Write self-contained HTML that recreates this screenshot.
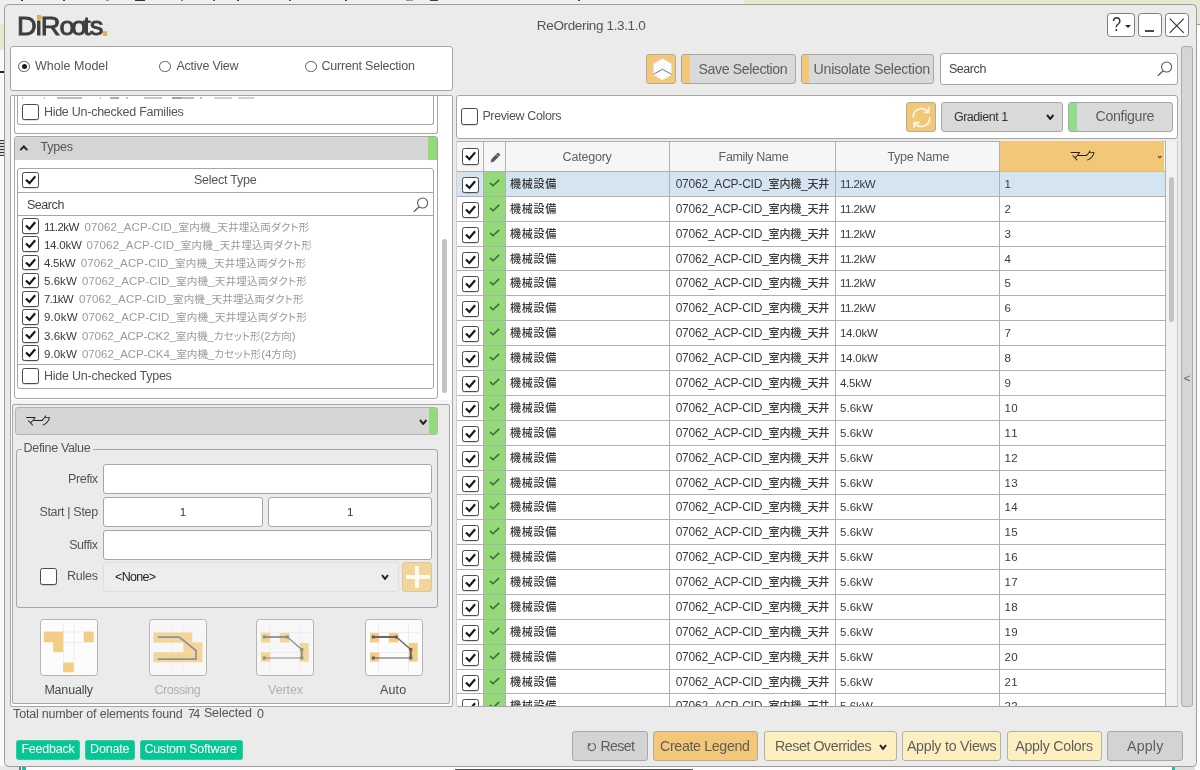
<!DOCTYPE html>
<html><head><meta charset="utf-8"><title>ReOrdering 1.3.1.0</title>
<style>
*{box-sizing:border-box;margin:0;padding:0}
html,body{width:1200px;height:770px;overflow:hidden}
body{position:relative;background:#fdfdfd;font-family:"Liberation Sans","Noto Sans CJK JP",sans-serif;font-size:12.5px;color:#555}
.a{position:absolute}
.win{left:4px;top:4px;width:1192.6px;height:762.6px;background:#ebebeb;border:1px solid #9c9c9c;border-radius:4.5px}
.box{position:absolute;background:#fff;border:1px solid #a6a6a6;border-radius:3px}
.t{position:absolute;white-space:nowrap}
.j{font-size:.92em;font-feature-settings:"palt";font-weight:var(--w,400)}
.cb{position:absolute;background:#fff;border:1px solid #4c4c4c;border-radius:2.5px;box-shadow:0 .5px 0 rgba(0,0,0,.25)}
.btn{position:absolute;border:1px solid #a8a8a8;border-radius:3px;background:#d9d9d9}
.rad{position:absolute;width:11.5px;height:11.5px;border:1px solid #5a5a5a;border-radius:50%;background:#fff}
.rad.on:after{content:"";position:absolute;left:2.25px;top:2.25px;width:5px;height:5px;border-radius:50%;background:#1c1c1c}
#all{position:absolute;left:0;top:0;width:1200px;height:770px;will-change:transform}
</style></head><body><div id="all">

<div class="a" style="left:0;top:0;width:1200px;height:5px;background:#efefef"></div>
<div class="a" style="left:744px;top:0;width:456px;height:24px;background:#e3ecd3"></div>
<div class="a" style="left:1196px;top:24px;width:4px;height:1px;background:#999"></div>
<div class="a" style="left:0;top:0;width:5px;height:24px;background:#efefef"></div>
<div class="a" style="left:0;top:24px;width:5px;height:26px;background:#e3ecd3"></div>
<div class="a" style="left:0;top:50px;width:5px;height:716px;background:#fafafa"></div>
<div class="a" style="left:0;top:71px;width:4px;height:1.5px;background:#222"></div>
<div class="a" style="left:0;top:140px;width:4px;height:16px;background:repeating-linear-gradient(180deg,#333 0 1.5px,#ddd 1.5px 3px)"></div>
<div class="a" style="left:0;top:766px;width:19px;height:4px;background:#e8e8e8"></div>
<div class="a" style="left:19px;top:766px;width:1.5px;height:4px;background:#777"></div>
<div class="a" style="left:22px;top:766px;width:3.5px;height:4px;background:#18c1a0"></div>
<div class="a" style="left:455px;top:769px;width:238px;height:1px;background:#555"></div>
<div class="a" style="left:1172px;top:766px;width:3px;height:4px;background:#18c1a0"></div>
<div class="a" style="left:1175px;top:766px;width:20px;height:4px;background:#dedede"></div>
<div class="a" style="left:21px;top:0;width:2px;height:1px;background:#333"></div>
<div class="a" style="left:63px;top:0;width:2px;height:1px;background:#444"></div>
<div class="a" style="left:106px;top:0;width:3px;height:1px;background:#999"></div>
<div class="a" style="left:135px;top:0;width:10px;height:1px;background:#333"></div>
<div class="a" style="left:181px;top:0;width:2px;height:1px;background:#777"></div>
<div class="a" style="left:213px;top:0;width:2px;height:1px;background:#555"></div>
<div class="a" style="left:237px;top:0;width:2px;height:1px;background:#444"></div>
<div class="a" style="left:289px;top:0;width:2px;height:1px;background:#555"></div>
<div class="a" style="left:345px;top:0;width:2px;height:1px;background:#444"></div>
<div class="a" style="left:406px;top:0;width:7px;height:1px;background:#999"></div>
<div class="a" style="left:430px;top:0;width:8px;height:1px;background:#345"></div>
<div class="a" style="left:578px;top:0;width:2px;height:1px;background:#444"></div>
<div class="a win"></div>
<div class="t" style="left:17px;top:10.5px;font-size:25.5px;line-height:30px;color:#3d3d3d;letter-spacing:-0.9px;-webkit-text-stroke:0.9px #3d3d3d;transform:scaleX(1.07);transform-origin:0 0">DiR<span style="letter-spacing:-3.2px">oo</span>ts</div>
<div class="a" style="left:36.5px;top:15px;width:5.2px;height:5.2px;border-radius:50%;background:#e8b04a"></div>
<div class="t" style="left:98.9px;top:6.4px;font-size:44px;line-height:30px;color:#e8b04a">.</div>
<div class="t" style="left:536.83px;top:18px;font-size:13.5px;line-height:16px;color:#555;letter-spacing:-0.352px;">ReOrdering 1.3.1.0</div>
<div class="box" style="left:1106.5px;top:13px;width:28.5px;height:24px;border-color:#7e7e7e;border-radius:3.5px"></div>
<div class="t" style="left:1111.5px;top:12px;font-size:20.5px;line-height:24px;color:#333;transform:scaleX(.8);transform-origin:0 0">?</div>
<div class="a" style="left:1125px;top:24.5px;border:3.2px solid transparent;border-top:3.8px solid #222;border-bottom:none"></div>
<div class="box" style="left:1138px;top:13px;width:23.5px;height:24px;border-color:#7e7e7e;border-radius:3.5px"></div>
<div class="a" style="left:1144.8px;top:30.2px;width:9.7px;height:1.7px;background:#4a4a4a"></div>
<div class="box" style="left:1165px;top:13px;width:23.5px;height:24px;border-color:#7e7e7e;border-radius:3.5px"></div>
<svg class="a" style="left:1165px;top:13.5px" width="24" height="24"><path d="M4.7 4.7 L18.8 18.9 M18.8 4.7 L4.7 18.9" stroke="#333" stroke-width="1.15"/></svg>
<div class="box" style="left:9.5px;top:45.5px;width:443.5px;height:45px"></div>
<div class="rad on" style="left:18.3px;top:60.7px"></div>
<div class="t" style="left:34.88px;top:58px;font-size:12.5px;line-height:16px;color:#555;letter-spacing:0.030px;">Whole Model</div>
<div class="rad" style="left:159.3px;top:60.7px"></div>
<div class="t" style="left:176.38px;top:58px;font-size:12.5px;line-height:16px;color:#555;letter-spacing:-0.214px;">Active View</div>
<div class="rad" style="left:305px;top:60.7px"></div>
<div class="t" style="left:321.38px;top:58px;font-size:12.5px;line-height:16px;color:#555;letter-spacing:-0.192px;">Current Selection</div>
<div class="box" style="left:9.5px;top:94.5px;width:443.5px;height:612px;border-radius:2px;background:#fff"></div>
<div class="a" style="left:12px;top:404px;width:437.5px;height:300px;background:#ebebeb;border:1px solid #a6a6a6;border-radius:2px"></div>
<div class="a" style="left:10.5px;top:400px;width:441.5px;height:4px;background:#f4f4f4"></div>
<div class="a" style="left:13.5px;top:95.5px;width:424.5px;height:38px;background:#fff;border:1px solid #a6a6a6;border-top:none;border-radius:0 0 3px 3px"></div>
<div class="a" style="left:17px;top:95.5px;width:417px;height:29px;background:#fff;border:1px solid #a6a6a6;border-top:none;border-radius:0 0 3px 3px"></div>
<div class="a" style="left:22px;top:97px;width:232px;height:1.5px;opacity:.55;background:linear-gradient(90deg,#888 0 1px,transparent 1px 22px,#888 22px 23px,transparent 23px 35px,#888 35px 60px,transparent 60px 78px,#888 78px 79px,transparent 79px 88px,#666 88px 97px,transparent 97px 104px,#999 104px 106px,transparent 106px 122px,#999 122px 140px,transparent 140px 150px,#555 150px 160px,#888 160px 172px,transparent 172px 178px,#888 178px 180px,transparent 180px 192px,#aaa 192px 210px,transparent 210px 216px,#aaa 216px 232px)"></div>
<div class="cb" style="left:22px;top:104px;width:16.8px;height:16.3px"></div>
<div class="t" style="left:43.88px;top:104px;font-size:12.5px;line-height:16px;color:#555;letter-spacing:-0.256px;">Hide Un-checked Families</div>
<div class="a" style="left:13.5px;top:136px;width:424.5px;height:262.5px;background:#fff;border:1px solid #a6a6a6;border-radius:3px"></div>
<div class="a" style="left:14.5px;top:137px;width:422.5px;height:23px;background:#d5d5d5;border-radius:2px 2px 0 0"></div>
<div class="a" style="left:428px;top:137px;width:9px;height:23px;background:#95da78;border-radius:0 2px 0 0"></div>
<svg class="a" style="left:19px;top:144px" width="10" height="8" viewBox="0 0 10 8"><path d="M1.3 6.2 L4.8 2.5 L8.3 6.2" fill="none" stroke="#222" stroke-width="1.9"/></svg>
<div class="t" style="left:40.38px;top:139px;font-size:12.5px;line-height:16px;color:#555;letter-spacing:-0.152px;">Types</div>
<div class="box" style="left:17px;top:167.5px;width:417px;height:221.5px"></div>
<div class="a" style="left:18px;top:191.5px;width:415.5px;height:1px;background:#a6a6a6"></div>
<div class="a" style="left:18px;top:215px;width:415.5px;height:1px;background:#a6a6a6"></div>
<div class="a" style="left:18px;top:364px;width:415.5px;height:1px;background:#a6a6a6"></div>
<div class="cb" style="left:22px;top:171.7px;width:16.8px;height:16.3px"><svg style="position:absolute;left:-1px;top:-1px" width="16.8" height="16.3" viewBox="0 0 16 16" preserveAspectRatio="none"><path d="M4.6 8.3 L7.2 10.9 L12 5.1" fill="none" stroke="#1a1a1a" stroke-width="2.15" stroke-linecap="square"/></svg></div>
<div class="t" style="left:193.88px;top:172px;font-size:12.5px;line-height:16px;color:#555;letter-spacing:-0.234px;">Select Type</div>
<div class="t" style="left:26.88px;top:197px;font-size:12.5px;line-height:16px;color:#444;letter-spacing:-0.422px;">Search</div>
<svg class="a" style="left:412.8px;top:197px" width="16" height="16" viewBox="0 0 16 16"><circle cx="9.6" cy="6" r="5" fill="none" stroke="#5a5a5a" stroke-width="1.1"/><path d="M6.1 9.8 L0.8 14.8" stroke="#5a5a5a" stroke-width="1.3"/></svg>
<div class="cb" style="left:22px;top:218.25px;width:16.6px;height:15.9px"><svg style="position:absolute;left:-1px;top:-1px" width="16.6" height="15.9" viewBox="0 0 16 16" preserveAspectRatio="none"><path d="M4.6 8.3 L7.2 10.9 L12 5.1" fill="none" stroke="#1a1a1a" stroke-width="2.15" stroke-linecap="square"/></svg></div>
<div class="t" style="left:43.92px;top:219px;font-size:11.5px;line-height:16px;color:#3a3a3a;letter-spacing:-0.548px;">11.2kW</div>
<div class="t" style="left:84.42px;top:219px;font-size:11.5px;line-height:16px;color:#9a9a9a;letter-spacing:0.150px;">07062_ACP-CID_<span class="j">室内機</span>_<span class="j">天井埋込両ダクト形</span></div>
<div class="cb" style="left:22px;top:236.25px;width:16.6px;height:15.9px"><svg style="position:absolute;left:-1px;top:-1px" width="16.6" height="15.9" viewBox="0 0 16 16" preserveAspectRatio="none"><path d="M4.6 8.3 L7.2 10.9 L12 5.1" fill="none" stroke="#1a1a1a" stroke-width="2.15" stroke-linecap="square"/></svg></div>
<div class="t" style="left:43.92px;top:237px;font-size:11.5px;line-height:16px;color:#3a3a3a;letter-spacing:-0.220px;">14.0kW</div>
<div class="t" style="left:86.42px;top:237px;font-size:11.5px;line-height:16px;color:#9a9a9a;letter-spacing:0.169px;">07062_ACP-CID_<span class="j">室内機</span>_<span class="j">天井埋込両ダクト形</span></div>
<div class="cb" style="left:22px;top:254.5px;width:16.6px;height:15.9px"><svg style="position:absolute;left:-1px;top:-1px" width="16.6" height="15.9" viewBox="0 0 16 16" preserveAspectRatio="none"><path d="M4.6 8.3 L7.2 10.9 L12 5.1" fill="none" stroke="#1a1a1a" stroke-width="2.15" stroke-linecap="square"/></svg></div>
<div class="t" style="left:43.92px;top:255px;font-size:11.5px;line-height:16px;color:#3a3a3a;letter-spacing:-0.236px;">4.5kW</div>
<div class="t" style="left:80.67px;top:255px;font-size:11.5px;line-height:16px;color:#9a9a9a;letter-spacing:0.169px;">07062_ACP-CID_<span class="j">室内機</span>_<span class="j">天井埋込両ダクト形</span></div>
<div class="cb" style="left:22px;top:272.5px;width:16.6px;height:15.9px"><svg style="position:absolute;left:-1px;top:-1px" width="16.6" height="15.9" viewBox="0 0 16 16" preserveAspectRatio="none"><path d="M4.6 8.3 L7.2 10.9 L12 5.1" fill="none" stroke="#1a1a1a" stroke-width="2.15" stroke-linecap="square"/></svg></div>
<div class="t" style="left:43.92px;top:273px;font-size:11.5px;line-height:16px;color:#3a3a3a;letter-spacing:0.077px;">5.6kW</div>
<div class="t" style="left:81.92px;top:273px;font-size:11.5px;line-height:16px;color:#9a9a9a;letter-spacing:0.150px;">07062_ACP-CID_<span class="j">室内機</span>_<span class="j">天井埋込両ダクト形</span></div>
<div class="cb" style="left:22px;top:290.75px;width:16.6px;height:15.9px"><svg style="position:absolute;left:-1px;top:-1px" width="16.6" height="15.9" viewBox="0 0 16 16" preserveAspectRatio="none"><path d="M4.6 8.3 L7.2 10.9 L12 5.1" fill="none" stroke="#1a1a1a" stroke-width="2.15" stroke-linecap="square"/></svg></div>
<div class="t" style="left:43.92px;top:291px;font-size:11.5px;line-height:16px;color:#3a3a3a;letter-spacing:-0.736px;">7.1kW</div>
<div class="t" style="left:78.92px;top:291px;font-size:11.5px;line-height:16px;color:#9a9a9a;letter-spacing:0.140px;">07062_ACP-CID_<span class="j">室内機</span>_<span class="j">天井埋込両ダクト形</span></div>
<div class="cb" style="left:22px;top:308.75px;width:16.6px;height:15.9px"><svg style="position:absolute;left:-1px;top:-1px" width="16.6" height="15.9" viewBox="0 0 16 16" preserveAspectRatio="none"><path d="M4.6 8.3 L7.2 10.9 L12 5.1" fill="none" stroke="#1a1a1a" stroke-width="2.15" stroke-linecap="square"/></svg></div>
<div class="t" style="left:43.92px;top:309px;font-size:11.5px;line-height:16px;color:#3a3a3a;letter-spacing:0.264px;">9.0kW</div>
<div class="t" style="left:81.92px;top:309px;font-size:11.5px;line-height:16px;color:#9a9a9a;letter-spacing:0.150px;">07062_ACP-CID_<span class="j">室内機</span>_<span class="j">天井埋込両ダクト形</span></div>
<div class="cb" style="left:22px;top:327px;width:16.6px;height:15.9px"><svg style="position:absolute;left:-1px;top:-1px" width="16.6" height="15.9" viewBox="0 0 16 16" preserveAspectRatio="none"><path d="M4.6 8.3 L7.2 10.9 L12 5.1" fill="none" stroke="#1a1a1a" stroke-width="2.15" stroke-linecap="square"/></svg></div>
<div class="t" style="left:43.92px;top:328px;font-size:11.5px;line-height:16px;color:#3a3a3a;letter-spacing:0.077px;">3.6kW</div>
<div class="t" style="left:81.92px;top:328px;font-size:11.5px;line-height:16px;color:#9a9a9a;letter-spacing:-0.048px;">07062_ACP-CK2_<span class="j">室内機</span>_<span class="j">カセット形</span>(2<span class="j">方向</span>)</div>
<div class="cb" style="left:22px;top:345.25px;width:16.6px;height:15.9px"><svg style="position:absolute;left:-1px;top:-1px" width="16.6" height="15.9" viewBox="0 0 16 16" preserveAspectRatio="none"><path d="M4.6 8.3 L7.2 10.9 L12 5.1" fill="none" stroke="#1a1a1a" stroke-width="2.15" stroke-linecap="square"/></svg></div>
<div class="t" style="left:43.92px;top:346px;font-size:11.5px;line-height:16px;color:#3a3a3a;letter-spacing:0.077px;">9.0kW</div>
<div class="t" style="left:81.92px;top:346px;font-size:11.5px;line-height:16px;color:#9a9a9a;letter-spacing:-0.019px;">07062_ACP-CK4_<span class="j">室内機</span>_<span class="j">カセット形</span>(4<span class="j">方向</span>)</div>
<div class="cb" style="left:22px;top:368px;width:16.8px;height:16.3px"></div>
<div class="t" style="left:43.88px;top:368px;font-size:12.5px;line-height:16px;color:#555;letter-spacing:-0.224px;">Hide Un-checked Types</div>
<div class="a" style="left:442.3px;top:238.5px;width:5px;height:154px;background:#c4c4c4;border-radius:2.5px"></div>
<div class="a" style="left:14.5px;top:406.5px;width:423px;height:28.5px;background:#d6d6d6;border:1px solid #b4b4b4;border-radius:3px"></div>
<div class="a" style="left:428.5px;top:407.5px;width:8px;height:26.5px;background:#95da78;border-radius:0 2px 2px 0"></div>
<div class="t" style="left:25.62px;top:413px;font-size:12.5px;line-height:16px;color:#222;letter-spacing:-3.477px;"><span class="j">マーク</span></div>
<svg class="a" style="left:418.5px;top:418.5px" width="8.5" height="6.5" viewBox="0 0 8.5 6.5"><path d="M1 1 L4.25 4.9 L7.5 1" fill="none" stroke="#222" stroke-width="2"/></svg>
<div class="a" style="left:15.5px;top:448.5px;width:422px;height:159px;border:1px solid #a6a6a6;border-radius:3px"></div>
<div class="a" style="left:21.5px;top:446px;width:71px;height:5px;background:#ebebeb"></div>
<div class="t" style="left:23.62px;top:440px;font-size:12.5px;line-height:16px;color:#555;letter-spacing:-0.332px;">Define Value</div>
<div class="t" style="left:68.12px;top:471px;font-size:12.5px;line-height:16px;color:#555;letter-spacing:-0.391px;">Prefix</div>
<div class="box" style="left:102.5px;top:464px;width:329.5px;height:30px"></div>
<div class="t" style="left:39.38px;top:504px;font-size:12.5px;line-height:16px;color:#555;letter-spacing:-0.324px;">Start | Step</div>
<div class="box" style="left:102.5px;top:496.5px;width:160.5px;height:30px"></div>
<div class="t" style="left:179.73px;top:504px;font-size:11.5px;line-height:16px;color:#333;letter-spacing:0.0px;">1</div>
<div class="box" style="left:267.5px;top:496.5px;width:164.5px;height:30px"></div>
<div class="t" style="left:347.12px;top:504px;font-size:11.5px;line-height:16px;color:#333;letter-spacing:0.0px;">1</div>
<div class="t" style="left:69.17px;top:537px;font-size:12.5px;line-height:16px;color:#555;letter-spacing:-0.419px;">Suffix</div>
<div class="box" style="left:102.5px;top:529.5px;width:329.5px;height:30px"></div>
<div class="cb" style="left:40px;top:568px;width:16.8px;height:16.8px"></div>
<div class="t" style="left:66.88px;top:568px;font-size:12.5px;line-height:16px;color:#555;letter-spacing:-0.180px;">Rules</div>
<div class="a" style="left:102.5px;top:562px;width:296.5px;height:29.5px;background:#ededed;border:1px solid #dedede;border-radius:3px"></div>
<div class="t" style="left:115.08px;top:569px;font-size:12.5px;line-height:16px;color:#222;letter-spacing:-0.707px;">&lt;None&gt;</div>
<svg class="a" style="left:381px;top:573.8px" width="8" height="6.5" viewBox="0 0 8 6.5"><path d="M1 1 L4 4.9 L7 1" fill="none" stroke="#222" stroke-width="2"/></svg>
<div class="a" style="left:402px;top:562px;width:29.5px;height:29.5px;background:#f3d49a;border:1px solid #d9c7a2;border-radius:3px"></div>
<div class="a" style="left:406px;top:575.3px;width:24px;height:3.8px;background:#fffaf2"></div><div class="a" style="left:415px;top:566px;width:4.2px;height:22px;background:#fffaf2"></div>
<div class="a" style="left:40px;top:619px;width:57.5px;height:57px;background:#fcfcfc;border:1px solid #b4b4b4;border-radius:3.5px"></div>
<svg class="a" style="left:40px;top:619px" width="58" height="58" viewBox="0 0 58 58"><path d="M23.5 4 V53 M34 4 V53 M4 13 H54 M4 23.5 H54" stroke="#eeeeee" stroke-width="1" fill="none"/><g fill="#f2cd83"><rect x="3.7" y="12.7" width="19.5" height="10.3"/><rect x="43.7" y="12.7" width="10" height="10.3"/><rect x="13.2" y="23" width="10" height="10.200"/><rect x="23.2" y="43.5" width="10.5" height="9.800"/></g></svg>
<div class="a" style="left:149.2px;top:619px;width:57.5px;height:57px;background:#f7f7f7;border:1px solid #b4b4b4;border-radius:3.5px"></div>
<svg class="a" style="left:149.2px;top:619px" width="58" height="58" viewBox="0 0 58 58"><path d="M23.5 4 V53 M34 4 V53 M4 13 H54 M4 23.5 H54" stroke="#eeeeee" stroke-width="1" fill="none"/><g fill="#f3d598"><rect x="4.5" y="13.5" width="38.7" height="10"/><rect x="4.5" y="33.2" width="49" height="10"/><rect x="34.500" y="23.500" width="19" height="10"/></g><path d="M8.800 18.200 H30.3 L47 31.500 V40.200 H8.800" fill="none" stroke="#8a93a0" stroke-width="1.700"/></svg>
<div class="a" style="left:256.2px;top:619px;width:57.5px;height:57px;background:#f7f7f7;border:1px solid #b4b4b4;border-radius:3.5px"></div>
<svg class="a" style="left:256.2px;top:619px" width="58" height="58" viewBox="0 0 58 58"><path d="M13.5 4 V53 M43.5 4 V53 M4 13.5 H54 M4 33.5 H54" stroke="#eeeeee" stroke-width="1" fill="none"/><g fill="#f3d598"><rect x="5" y="14" width="9.300" height="9.500"/><rect x="23.800" y="14" width="9.500" height="9.500"/><rect x="43.800" y="24" width="8.800" height="18.700"/><rect x="5" y="33.500" width="9.300" height="9.200"/></g><path d="M8.300 18 H31.300" fill="none" stroke="#8c8c8c" stroke-width="1.8"/><path d="M31.300 18 L45.800 30.500" fill="none" stroke="#8c8c8c" stroke-width="1.300"/><path d="M45.800 30.500 V39" fill="none" stroke="#8c8c8c" stroke-width="1.8"/><path d="M8.300 39 H45.800" stroke="#8c8c8c" stroke-width="1"/><g fill="#8c8c8c"><rect x="6.800" y="16.500" width="3" height="3"/><rect x="29.800" y="16.500" width="3" height="3"/><rect x="44.300" y="29" width="3" height="3"/><rect x="44.300" y="37.500" width="3" height="3"/><rect x="6.800" y="37.500" width="3" height="3"/></g></svg>
<div class="a" style="left:365px;top:619px;width:57.5px;height:57px;background:#fcfcfc;border:1px solid #b4b4b4;border-radius:3.5px"></div>
<svg class="a" style="left:365px;top:619px" width="58" height="58" viewBox="0 0 58 58"><path d="M13.5 4 V53 M43.5 4 V53 M4 13.5 H54 M4 33.5 H54" stroke="#eeeeee" stroke-width="1" fill="none"/><g fill="#f2cd83"><rect x="5" y="14" width="9.300" height="9.500"/><rect x="23.800" y="14" width="9.500" height="9.500"/><rect x="43.800" y="24" width="8.800" height="18.700"/><rect x="5" y="33.500" width="9.300" height="9.200"/></g><path d="M8.300 18 H31.300" fill="none" stroke="#5f5f5f" stroke-width="1.9"/><path d="M31.300 18 L45.800 30.500" fill="none" stroke="#5f5f5f" stroke-width="1.300"/><path d="M45.800 30.500 V39" fill="none" stroke="#5f5f5f" stroke-width="1.9"/><path d="M8.300 39 H45.800" stroke="#5f5f5f" stroke-width="1"/><g fill="#5f5f5f"><rect x="6.800" y="16.500" width="3" height="3"/><rect x="29.800" y="16.500" width="3" height="3"/><rect x="44.300" y="29" width="3" height="3"/><rect x="44.300" y="37.500" width="3" height="3"/><rect x="6.800" y="37.500" width="3" height="3"/></g></svg>
<div class="t" style="left:44.38px;top:682px;font-size:12.5px;line-height:16px;color:#4a4a4a;letter-spacing:-0.183px;">Manually</div>
<div class="t" style="left:154.38px;top:682px;font-size:12.5px;line-height:16px;color:#b0b0b0;letter-spacing:-0.440px;">Crossing</div>
<div class="t" style="left:268.12px;top:682px;font-size:12.5px;line-height:16px;color:#b0b0b0;letter-spacing:-0.087px;">Vertex</div>
<div class="t" style="left:379.88px;top:682px;font-size:12.5px;line-height:16px;color:#4a4a4a;letter-spacing:0.177px;">Auto</div>
<div class="t" style="left:13.12px;top:706px;font-size:12.5px;line-height:16px;color:#555;letter-spacing:-0.193px;">Total number of elements found</div>
<div class="t" style="left:188.12px;top:706px;font-size:12.5px;line-height:16px;color:#555;letter-spacing:-1.906px;">74</div>
<div class="t" style="left:203.88px;top:705px;font-size:12.5px;line-height:16px;color:#555;letter-spacing:-0.094px;">Selected</div>
<div class="t" style="left:256.88px;top:706px;font-size:12.5px;line-height:16px;color:#555;letter-spacing:0.0px;">0</div>
<div class="a" style="left:16.25px;top:739.5px;width:63.75px;height:20px;background:#06c794;border-radius:3px;border:1px dotted #4fd8b2"></div>
<div class="a" style="left:85px;top:739.5px;width:49.5px;height:20px;background:#06c794;border-radius:3px;border:1px dotted #4fd8b2"></div>
<div class="a" style="left:139.5px;top:739.5px;width:103px;height:20px;background:#06c794;border-radius:3px;border:1px dotted #4fd8b2"></div>
<div class="t" style="left:21.38px;top:741px;font-size:12.5px;line-height:16px;color:#fff;letter-spacing:-0.201px;">Feedback</div>
<div class="t" style="left:90.12px;top:741px;font-size:12.5px;line-height:16px;color:#fff;letter-spacing:-0.212px;">Donate</div>
<div class="t" style="left:144.38px;top:741px;font-size:12.5px;line-height:16px;color:#fff;letter-spacing:-0.241px;">Custom Software</div>
<div class="a" style="left:645.5px;top:53.5px;width:30.5px;height:30.5px;background:#f2c878;border:1px solid #b3ab98;border-radius:3px"></div>
<svg class="a" style="left:645.5px;top:53.5px" width="31" height="31" viewBox="0 0 31 31"><path d="M16.500 4.500 L25.700 9.700 V21 L16.500 26.200 L7.300 21 V9.700 Z" fill="#fcfcfc" stroke="#e6dcc6" stroke-width=".8"/><path d="M7.500 20.300 L16.500 15.300 L25.500 20.300" fill="none" stroke="#666" stroke-width=".9"/></svg>
<div class="btn" style="left:681.25px;top:53.5px;width:114.25px;height:30.5px"></div>
<div class="a" style="left:682.25px;top:54.5px;width:7.5px;height:28.5px;background:#f2c878;border-radius:2px 0 0 2px"></div>
<div class="t" style="left:698.54px;top:61px;font-size:14.2px;line-height:16px;color:#5e5e5e;letter-spacing:-0.422px;">Save Selection</div>
<div class="btn" style="left:800.75px;top:53.5px;width:133.25px;height:30.5px"></div>
<div class="a" style="left:801.75px;top:54.5px;width:7.5px;height:28.5px;background:#f2c878;border-radius:2px 0 0 2px"></div>
<div class="t" style="left:813.54px;top:61px;font-size:14.2px;line-height:16px;color:#5e5e5e;letter-spacing:-0.266px;">Unisolate Selection</div>
<div class="box" style="left:939.5px;top:53px;width:238px;height:31.5px"></div>
<div class="t" style="left:948.88px;top:61px;font-size:12.5px;line-height:16px;color:#444;letter-spacing:-0.422px;">Search</div>
<svg class="a" style="left:1157.2px;top:61.2px" width="16" height="16" viewBox="0 0 16 16"><circle cx="9.6" cy="6" r="5" fill="none" stroke="#5a5a5a" stroke-width="1.1"/><path d="M6.1 9.8 L0.8 14.8" stroke="#5a5a5a" stroke-width="1.3"/></svg>
<div class="box" style="left:456px;top:94.5px;width:721.5px;height:44px"></div>
<div class="cb" style="left:461.2px;top:108px;width:16.8px;height:16.5px"></div>
<div class="t" style="left:482.38px;top:108px;font-size:12.5px;line-height:16px;color:#555;letter-spacing:-0.370px;">Preview Colors</div>
<div class="a" style="left:905.5px;top:101.5px;width:30.5px;height:30.5px;background:#f2c878;border:1px solid #b3ab98;border-radius:3px"></div>
<svg class="a" style="left:905.5px;top:101.5px" width="31" height="31" viewBox="0 0 31 31"><g fill="none" stroke="#fdf7ea" stroke-width="1.700" stroke-linecap="round" stroke-linejoin="round"><path d="M7.300 14.800 A8.300 8.300 0 0 1 22.300 10"/><path d="M22.800 5.800 V10.300 H18.300"/><path d="M23.700 16.200 A8.300 8.300 0 0 1 8.700 21"/><path d="M8.200 25.200 V20.700 H12.700"/></g></svg>
<div class="btn" style="left:941.25px;top:101.5px;width:122px;height:30.5px"></div>
<div class="t" style="left:953.88px;top:109px;font-size:12.5px;line-height:16px;color:#333;letter-spacing:-0.458px;">Gradient 1</div>
<svg class="a" style="left:1045.5px;top:113.8px" width="8.5" height="6.5" viewBox="0 0 8.5 6.5"><path d="M1 1 L4.25 4.9 L7.5 1" fill="none" stroke="#222" stroke-width="2"/></svg>
<div class="btn" style="left:1068.25px;top:101.5px;width:105px;height:30.5px"></div>
<div class="a" style="left:1069.25px;top:102.5px;width:8px;height:28.5px;background:#90dd8e;border-radius:2px 0 0 2px"></div>
<div class="t" style="left:1095.54px;top:108px;font-size:14.2px;line-height:16px;color:#5e5e5e;letter-spacing:-0.326px;">Configure</div>
<div class="a" style="left:456.5px;top:141px;width:721px;height:565px;background:#fff;overflow:hidden">
<div class="a" style="left:0;top:0;width:709px;height:31px;background:#f6f6f6;border-top:1px solid #b0b0b0;border-bottom:1px solid #b0b0b0"></div>
<div class="a" style="left:543px;top:0;width:164.7px;height:30.5px;background:#f2c878;border-bottom:1px dotted #d8b060"></div>
</div>
<div class="a" style="left:0;top:0;width:1200px;height:706px;overflow:hidden">
<div class="cb" style="left:462px;top:148.3px;width:16.5px;height:16.4px"><svg style="position:absolute;left:-1px;top:-1px" width="16.5" height="16.4" viewBox="0 0 16 16" preserveAspectRatio="none"><path d="M4.6 8.3 L7.2 10.9 L12 5.1" fill="none" stroke="#1a1a1a" stroke-width="2.15" stroke-linecap="square"/></svg></div>
<svg class="a" style="left:489.5px;top:151.5px" width="11" height="11" viewBox="0 0 11 11"><path d="M.6 10.400 L1.500 7 L7.400 1.100 Q8 .5 8.600 1.100 L9.900 2.400 Q10.500 3 9.900 3.600 L4 9.500 Z" fill="#5a5a5a"/><path d="M6.300 2.700 L8.300 4.700" stroke="#f6f6f6" stroke-width=".7"/></svg>
<div class="t" style="left:562.62px;top:149px;font-size:12.5px;line-height:16px;color:#616161;letter-spacing:-0.212px;">Category</div>
<div class="t" style="left:718.62px;top:149px;font-size:12.5px;line-height:16px;color:#616161;letter-spacing:-0.362px;">Family Name</div>
<div class="t" style="left:887.38px;top:149px;font-size:12.5px;line-height:16px;color:#616161;letter-spacing:-0.240px;">Type Name</div>
<div class="t" style="left:1070.12px;top:148px;font-size:12.5px;line-height:16px;color:#222;letter-spacing:-3.477px;"><span class="j">マーク</span></div>
<svg class="a" style="left:1156.7px;top:154.8px" width="5.5" height="4.4" viewBox="0 0 5.5 4.4"><path d="M1 1 L2.75 2.8 L4.5 1" fill="none" stroke="#444" stroke-width="1.1"/></svg>
<div class="a" style="left:457px;top:172px;width:708px;height:24px;background:#d5e4f1"></div>
<div class="a" style="left:484px;top:172px;width:21px;height:25px;background:#95da78"></div>
<div class="a" style="left:457px;top:196px;width:708px;height:1px;background:#b0b0b0"></div>
<div class="cb" style="left:462px;top:176.6px;width:16.5px;height:16px"><svg style="position:absolute;left:-1px;top:-1px" width="16.5" height="16" viewBox="0 0 16 16" preserveAspectRatio="none"><path d="M4.6 8.3 L7.2 10.9 L12 5.1" fill="none" stroke="#1a1a1a" stroke-width="2.15" stroke-linecap="square"/></svg></div>
<div class="a" style="left:488.6px;top:179px"><svg style="display:block" viewBox="0 0 12 9" width="12" height="9"><path d="M1 3.9 L4 6.8 L10.2 0.9" fill="none" stroke="#40663c" stroke-width="1.5"/></svg></div>
<div class="t" style="left:509.90px;top:176px;font-size:12px;line-height:16px;color:#333;letter-spacing:0.775px;--w:500;"><span class="j">機械設備</span></div>
<div class="t" style="left:675.65px;top:176px;font-size:12px;line-height:16px;color:#3a3a3a;letter-spacing:-0.221px;--w:500;">07062_ACP-CID_<span class="j">室内機</span>_<span class="j">天井</span></div>
<div class="t" style="left:839.92px;top:176px;font-size:11.5px;line-height:16px;color:#3a3a3a;letter-spacing:-0.498px;">11.2kW</div>
<div class="t" style="left:1004.42px;top:176px;font-size:11.5px;line-height:16px;color:#3a3a3a;letter-spacing:0.0px;">1</div>
<div class="a" style="left:484px;top:197px;width:21px;height:25px;background:#95da78"></div>
<div class="a" style="left:457px;top:221px;width:708px;height:1px;background:#b0b0b0"></div>
<div class="cb" style="left:462px;top:201.6px;width:16.5px;height:16px"><svg style="position:absolute;left:-1px;top:-1px" width="16.5" height="16" viewBox="0 0 16 16" preserveAspectRatio="none"><path d="M4.6 8.3 L7.2 10.9 L12 5.1" fill="none" stroke="#1a1a1a" stroke-width="2.15" stroke-linecap="square"/></svg></div>
<div class="a" style="left:488.6px;top:204px"><svg style="display:block" viewBox="0 0 12 9" width="12" height="9"><path d="M1 3.9 L4 6.8 L10.2 0.9" fill="none" stroke="#40663c" stroke-width="1.5"/></svg></div>
<div class="t" style="left:509.90px;top:201px;font-size:12px;line-height:16px;color:#333;letter-spacing:0.775px;--w:500;"><span class="j">機械設備</span></div>
<div class="t" style="left:675.65px;top:201px;font-size:12px;line-height:16px;color:#3a3a3a;letter-spacing:-0.221px;--w:500;">07062_ACP-CID_<span class="j">室内機</span>_<span class="j">天井</span></div>
<div class="t" style="left:839.92px;top:201px;font-size:11.5px;line-height:16px;color:#3a3a3a;letter-spacing:-0.498px;">11.2kW</div>
<div class="t" style="left:1004.42px;top:201px;font-size:11.5px;line-height:16px;color:#3a3a3a;letter-spacing:0.0px;">2</div>
<div class="a" style="left:484px;top:222px;width:21px;height:25px;background:#95da78"></div>
<div class="a" style="left:457px;top:246px;width:708px;height:1px;background:#b0b0b0"></div>
<div class="cb" style="left:462px;top:226.6px;width:16.5px;height:16px"><svg style="position:absolute;left:-1px;top:-1px" width="16.5" height="16" viewBox="0 0 16 16" preserveAspectRatio="none"><path d="M4.6 8.3 L7.2 10.9 L12 5.1" fill="none" stroke="#1a1a1a" stroke-width="2.15" stroke-linecap="square"/></svg></div>
<div class="a" style="left:488.6px;top:229px"><svg style="display:block" viewBox="0 0 12 9" width="12" height="9"><path d="M1 3.9 L4 6.8 L10.2 0.9" fill="none" stroke="#40663c" stroke-width="1.5"/></svg></div>
<div class="t" style="left:509.90px;top:226px;font-size:12px;line-height:16px;color:#333;letter-spacing:0.775px;--w:500;"><span class="j">機械設備</span></div>
<div class="t" style="left:675.65px;top:226px;font-size:12px;line-height:16px;color:#3a3a3a;letter-spacing:-0.221px;--w:500;">07062_ACP-CID_<span class="j">室内機</span>_<span class="j">天井</span></div>
<div class="t" style="left:839.92px;top:226px;font-size:11.5px;line-height:16px;color:#3a3a3a;letter-spacing:-0.498px;">11.2kW</div>
<div class="t" style="left:1004.42px;top:226px;font-size:11.5px;line-height:16px;color:#3a3a3a;letter-spacing:0.0px;">3</div>
<div class="a" style="left:484px;top:247px;width:21px;height:24px;background:#95da78"></div>
<div class="a" style="left:457px;top:270px;width:708px;height:1px;background:#b0b0b0"></div>
<div class="cb" style="left:462px;top:251.6px;width:16.5px;height:16px"><svg style="position:absolute;left:-1px;top:-1px" width="16.5" height="16" viewBox="0 0 16 16" preserveAspectRatio="none"><path d="M4.6 8.3 L7.2 10.9 L12 5.1" fill="none" stroke="#1a1a1a" stroke-width="2.15" stroke-linecap="square"/></svg></div>
<div class="a" style="left:488.6px;top:254px"><svg style="display:block" viewBox="0 0 12 9" width="12" height="9"><path d="M1 3.9 L4 6.8 L10.2 0.9" fill="none" stroke="#40663c" stroke-width="1.5"/></svg></div>
<div class="t" style="left:509.90px;top:251px;font-size:12px;line-height:16px;color:#333;letter-spacing:0.775px;--w:500;"><span class="j">機械設備</span></div>
<div class="t" style="left:675.65px;top:251px;font-size:12px;line-height:16px;color:#3a3a3a;letter-spacing:-0.221px;--w:500;">07062_ACP-CID_<span class="j">室内機</span>_<span class="j">天井</span></div>
<div class="t" style="left:839.92px;top:251px;font-size:11.5px;line-height:16px;color:#3a3a3a;letter-spacing:-0.498px;">11.2kW</div>
<div class="t" style="left:1004.42px;top:251px;font-size:11.5px;line-height:16px;color:#3a3a3a;letter-spacing:0.0px;">4</div>
<div class="a" style="left:484px;top:271px;width:21px;height:25px;background:#95da78"></div>
<div class="a" style="left:457px;top:295px;width:708px;height:1px;background:#b0b0b0"></div>
<div class="cb" style="left:462px;top:275.6px;width:16.5px;height:16px"><svg style="position:absolute;left:-1px;top:-1px" width="16.5" height="16" viewBox="0 0 16 16" preserveAspectRatio="none"><path d="M4.6 8.3 L7.2 10.9 L12 5.1" fill="none" stroke="#1a1a1a" stroke-width="2.15" stroke-linecap="square"/></svg></div>
<div class="a" style="left:488.6px;top:278px"><svg style="display:block" viewBox="0 0 12 9" width="12" height="9"><path d="M1 3.9 L4 6.8 L10.2 0.9" fill="none" stroke="#40663c" stroke-width="1.5"/></svg></div>
<div class="t" style="left:509.90px;top:275px;font-size:12px;line-height:16px;color:#333;letter-spacing:0.775px;--w:500;"><span class="j">機械設備</span></div>
<div class="t" style="left:675.65px;top:275px;font-size:12px;line-height:16px;color:#3a3a3a;letter-spacing:-0.221px;--w:500;">07062_ACP-CID_<span class="j">室内機</span>_<span class="j">天井</span></div>
<div class="t" style="left:839.92px;top:275px;font-size:11.5px;line-height:16px;color:#3a3a3a;letter-spacing:-0.498px;">11.2kW</div>
<div class="t" style="left:1004.42px;top:275px;font-size:11.5px;line-height:16px;color:#3a3a3a;letter-spacing:0.0px;">5</div>
<div class="a" style="left:484px;top:296px;width:21px;height:25px;background:#95da78"></div>
<div class="a" style="left:457px;top:320px;width:708px;height:1px;background:#b0b0b0"></div>
<div class="cb" style="left:462px;top:300.6px;width:16.5px;height:16px"><svg style="position:absolute;left:-1px;top:-1px" width="16.5" height="16" viewBox="0 0 16 16" preserveAspectRatio="none"><path d="M4.6 8.3 L7.2 10.9 L12 5.1" fill="none" stroke="#1a1a1a" stroke-width="2.15" stroke-linecap="square"/></svg></div>
<div class="a" style="left:488.6px;top:303px"><svg style="display:block" viewBox="0 0 12 9" width="12" height="9"><path d="M1 3.9 L4 6.8 L10.2 0.9" fill="none" stroke="#40663c" stroke-width="1.5"/></svg></div>
<div class="t" style="left:509.90px;top:300px;font-size:12px;line-height:16px;color:#333;letter-spacing:0.775px;--w:500;"><span class="j">機械設備</span></div>
<div class="t" style="left:675.65px;top:300px;font-size:12px;line-height:16px;color:#3a3a3a;letter-spacing:-0.221px;--w:500;">07062_ACP-CID_<span class="j">室内機</span>_<span class="j">天井</span></div>
<div class="t" style="left:839.92px;top:300px;font-size:11.5px;line-height:16px;color:#3a3a3a;letter-spacing:-0.498px;">11.2kW</div>
<div class="t" style="left:1004.42px;top:300px;font-size:11.5px;line-height:16px;color:#3a3a3a;letter-spacing:0.0px;">6</div>
<div class="a" style="left:484px;top:321px;width:21px;height:25px;background:#95da78"></div>
<div class="a" style="left:457px;top:345px;width:708px;height:1px;background:#b0b0b0"></div>
<div class="cb" style="left:462px;top:325.6px;width:16.5px;height:16px"><svg style="position:absolute;left:-1px;top:-1px" width="16.5" height="16" viewBox="0 0 16 16" preserveAspectRatio="none"><path d="M4.6 8.3 L7.2 10.9 L12 5.1" fill="none" stroke="#1a1a1a" stroke-width="2.15" stroke-linecap="square"/></svg></div>
<div class="a" style="left:488.6px;top:328px"><svg style="display:block" viewBox="0 0 12 9" width="12" height="9"><path d="M1 3.9 L4 6.8 L10.2 0.9" fill="none" stroke="#40663c" stroke-width="1.5"/></svg></div>
<div class="t" style="left:509.90px;top:325px;font-size:12px;line-height:16px;color:#333;letter-spacing:0.775px;--w:500;"><span class="j">機械設備</span></div>
<div class="t" style="left:675.65px;top:325px;font-size:12px;line-height:16px;color:#3a3a3a;letter-spacing:-0.221px;--w:500;">07062_ACP-CID_<span class="j">室内機</span>_<span class="j">天井</span></div>
<div class="t" style="left:839.92px;top:325px;font-size:11.5px;line-height:16px;color:#3a3a3a;letter-spacing:-0.220px;">14.0kW</div>
<div class="t" style="left:1004.42px;top:325px;font-size:11.5px;line-height:16px;color:#3a3a3a;letter-spacing:0.0px;">7</div>
<div class="a" style="left:484px;top:346px;width:21px;height:25px;background:#95da78"></div>
<div class="a" style="left:457px;top:370px;width:708px;height:1px;background:#b0b0b0"></div>
<div class="cb" style="left:462px;top:350.6px;width:16.5px;height:16px"><svg style="position:absolute;left:-1px;top:-1px" width="16.5" height="16" viewBox="0 0 16 16" preserveAspectRatio="none"><path d="M4.6 8.3 L7.2 10.9 L12 5.1" fill="none" stroke="#1a1a1a" stroke-width="2.15" stroke-linecap="square"/></svg></div>
<div class="a" style="left:488.6px;top:353px"><svg style="display:block" viewBox="0 0 12 9" width="12" height="9"><path d="M1 3.9 L4 6.8 L10.2 0.9" fill="none" stroke="#40663c" stroke-width="1.5"/></svg></div>
<div class="t" style="left:509.90px;top:350px;font-size:12px;line-height:16px;color:#333;letter-spacing:0.775px;--w:500;"><span class="j">機械設備</span></div>
<div class="t" style="left:675.65px;top:350px;font-size:12px;line-height:16px;color:#3a3a3a;letter-spacing:-0.221px;--w:500;">07062_ACP-CID_<span class="j">室内機</span>_<span class="j">天井</span></div>
<div class="t" style="left:839.92px;top:350px;font-size:11.5px;line-height:16px;color:#3a3a3a;letter-spacing:-0.220px;">14.0kW</div>
<div class="t" style="left:1004.42px;top:350px;font-size:11.5px;line-height:16px;color:#3a3a3a;letter-spacing:0.0px;">8</div>
<div class="a" style="left:484px;top:371px;width:21px;height:25px;background:#95da78"></div>
<div class="a" style="left:457px;top:395px;width:708px;height:1px;background:#b0b0b0"></div>
<div class="cb" style="left:462px;top:375.6px;width:16.5px;height:16px"><svg style="position:absolute;left:-1px;top:-1px" width="16.5" height="16" viewBox="0 0 16 16" preserveAspectRatio="none"><path d="M4.6 8.3 L7.2 10.9 L12 5.1" fill="none" stroke="#1a1a1a" stroke-width="2.15" stroke-linecap="square"/></svg></div>
<div class="a" style="left:488.6px;top:378px"><svg style="display:block" viewBox="0 0 12 9" width="12" height="9"><path d="M1 3.9 L4 6.8 L10.2 0.9" fill="none" stroke="#40663c" stroke-width="1.5"/></svg></div>
<div class="t" style="left:509.90px;top:375px;font-size:12px;line-height:16px;color:#333;letter-spacing:0.775px;--w:500;"><span class="j">機械設備</span></div>
<div class="t" style="left:675.65px;top:375px;font-size:12px;line-height:16px;color:#3a3a3a;letter-spacing:-0.221px;--w:500;">07062_ACP-CID_<span class="j">室内機</span>_<span class="j">天井</span></div>
<div class="t" style="left:839.92px;top:375px;font-size:11.5px;line-height:16px;color:#3a3a3a;letter-spacing:-0.236px;">4.5kW</div>
<div class="t" style="left:1004.42px;top:375px;font-size:11.5px;line-height:16px;color:#3a3a3a;letter-spacing:0.0px;">9</div>
<div class="a" style="left:484px;top:396px;width:21px;height:25px;background:#95da78"></div>
<div class="a" style="left:457px;top:420px;width:708px;height:1px;background:#b0b0b0"></div>
<div class="cb" style="left:462px;top:400.6px;width:16.5px;height:16px"><svg style="position:absolute;left:-1px;top:-1px" width="16.5" height="16" viewBox="0 0 16 16" preserveAspectRatio="none"><path d="M4.6 8.3 L7.2 10.9 L12 5.1" fill="none" stroke="#1a1a1a" stroke-width="2.15" stroke-linecap="square"/></svg></div>
<div class="a" style="left:488.6px;top:403px"><svg style="display:block" viewBox="0 0 12 9" width="12" height="9"><path d="M1 3.9 L4 6.8 L10.2 0.9" fill="none" stroke="#40663c" stroke-width="1.5"/></svg></div>
<div class="t" style="left:509.90px;top:400px;font-size:12px;line-height:16px;color:#333;letter-spacing:0.775px;--w:500;"><span class="j">機械設備</span></div>
<div class="t" style="left:675.65px;top:400px;font-size:12px;line-height:16px;color:#3a3a3a;letter-spacing:-0.221px;--w:500;">07062_ACP-CID_<span class="j">室内機</span>_<span class="j">天井</span></div>
<div class="t" style="left:839.92px;top:400px;font-size:11.5px;line-height:16px;color:#3a3a3a;letter-spacing:0.077px;">5.6kW</div>
<div class="t" style="left:1004.42px;top:400px;font-size:11.5px;line-height:16px;color:#3a3a3a;letter-spacing:0.353px;">10</div>
<div class="a" style="left:484px;top:421px;width:21px;height:25px;background:#95da78"></div>
<div class="a" style="left:457px;top:445px;width:708px;height:1px;background:#b0b0b0"></div>
<div class="cb" style="left:462px;top:425.6px;width:16.5px;height:16px"><svg style="position:absolute;left:-1px;top:-1px" width="16.5" height="16" viewBox="0 0 16 16" preserveAspectRatio="none"><path d="M4.6 8.3 L7.2 10.9 L12 5.1" fill="none" stroke="#1a1a1a" stroke-width="2.15" stroke-linecap="square"/></svg></div>
<div class="a" style="left:488.6px;top:428px"><svg style="display:block" viewBox="0 0 12 9" width="12" height="9"><path d="M1 3.9 L4 6.8 L10.2 0.9" fill="none" stroke="#40663c" stroke-width="1.5"/></svg></div>
<div class="t" style="left:509.90px;top:425px;font-size:12px;line-height:16px;color:#333;letter-spacing:0.775px;--w:500;"><span class="j">機械設備</span></div>
<div class="t" style="left:675.65px;top:425px;font-size:12px;line-height:16px;color:#3a3a3a;letter-spacing:-0.221px;--w:500;">07062_ACP-CID_<span class="j">室内機</span>_<span class="j">天井</span></div>
<div class="t" style="left:839.92px;top:425px;font-size:11.5px;line-height:16px;color:#3a3a3a;letter-spacing:0.077px;">5.6kW</div>
<div class="t" style="left:1004.42px;top:425px;font-size:11.5px;line-height:16px;color:#3a3a3a;letter-spacing:1.197px;">11</div>
<div class="a" style="left:484px;top:446px;width:21px;height:25px;background:#95da78"></div>
<div class="a" style="left:457px;top:470px;width:708px;height:1px;background:#b0b0b0"></div>
<div class="cb" style="left:462px;top:450.6px;width:16.5px;height:16px"><svg style="position:absolute;left:-1px;top:-1px" width="16.5" height="16" viewBox="0 0 16 16" preserveAspectRatio="none"><path d="M4.6 8.3 L7.2 10.9 L12 5.1" fill="none" stroke="#1a1a1a" stroke-width="2.15" stroke-linecap="square"/></svg></div>
<div class="a" style="left:488.6px;top:453px"><svg style="display:block" viewBox="0 0 12 9" width="12" height="9"><path d="M1 3.9 L4 6.8 L10.2 0.9" fill="none" stroke="#40663c" stroke-width="1.5"/></svg></div>
<div class="t" style="left:509.90px;top:450px;font-size:12px;line-height:16px;color:#333;letter-spacing:0.775px;--w:500;"><span class="j">機械設備</span></div>
<div class="t" style="left:675.65px;top:450px;font-size:12px;line-height:16px;color:#3a3a3a;letter-spacing:-0.221px;--w:500;">07062_ACP-CID_<span class="j">室内機</span>_<span class="j">天井</span></div>
<div class="t" style="left:839.92px;top:450px;font-size:11.5px;line-height:16px;color:#3a3a3a;letter-spacing:0.077px;">5.6kW</div>
<div class="t" style="left:1004.42px;top:450px;font-size:11.5px;line-height:16px;color:#3a3a3a;letter-spacing:0.353px;">12</div>
<div class="a" style="left:484px;top:471px;width:21px;height:24px;background:#95da78"></div>
<div class="a" style="left:457px;top:494px;width:708px;height:1px;background:#b0b0b0"></div>
<div class="cb" style="left:462px;top:475.6px;width:16.5px;height:16px"><svg style="position:absolute;left:-1px;top:-1px" width="16.5" height="16" viewBox="0 0 16 16" preserveAspectRatio="none"><path d="M4.6 8.3 L7.2 10.9 L12 5.1" fill="none" stroke="#1a1a1a" stroke-width="2.15" stroke-linecap="square"/></svg></div>
<div class="a" style="left:488.6px;top:478px"><svg style="display:block" viewBox="0 0 12 9" width="12" height="9"><path d="M1 3.9 L4 6.8 L10.2 0.9" fill="none" stroke="#40663c" stroke-width="1.5"/></svg></div>
<div class="t" style="left:509.90px;top:475px;font-size:12px;line-height:16px;color:#333;letter-spacing:0.775px;--w:500;"><span class="j">機械設備</span></div>
<div class="t" style="left:675.65px;top:475px;font-size:12px;line-height:16px;color:#3a3a3a;letter-spacing:-0.221px;--w:500;">07062_ACP-CID_<span class="j">室内機</span>_<span class="j">天井</span></div>
<div class="t" style="left:839.92px;top:475px;font-size:11.5px;line-height:16px;color:#3a3a3a;letter-spacing:0.077px;">5.6kW</div>
<div class="t" style="left:1004.42px;top:475px;font-size:11.5px;line-height:16px;color:#3a3a3a;letter-spacing:0.353px;">13</div>
<div class="a" style="left:484px;top:495px;width:21px;height:25px;background:#95da78"></div>
<div class="a" style="left:457px;top:519px;width:708px;height:1px;background:#b0b0b0"></div>
<div class="cb" style="left:462px;top:499.6px;width:16.5px;height:16px"><svg style="position:absolute;left:-1px;top:-1px" width="16.5" height="16" viewBox="0 0 16 16" preserveAspectRatio="none"><path d="M4.6 8.3 L7.2 10.9 L12 5.1" fill="none" stroke="#1a1a1a" stroke-width="2.15" stroke-linecap="square"/></svg></div>
<div class="a" style="left:488.6px;top:502px"><svg style="display:block" viewBox="0 0 12 9" width="12" height="9"><path d="M1 3.9 L4 6.8 L10.2 0.9" fill="none" stroke="#40663c" stroke-width="1.5"/></svg></div>
<div class="t" style="left:509.90px;top:499px;font-size:12px;line-height:16px;color:#333;letter-spacing:0.775px;--w:500;"><span class="j">機械設備</span></div>
<div class="t" style="left:675.65px;top:499px;font-size:12px;line-height:16px;color:#3a3a3a;letter-spacing:-0.221px;--w:500;">07062_ACP-CID_<span class="j">室内機</span>_<span class="j">天井</span></div>
<div class="t" style="left:839.92px;top:499px;font-size:11.5px;line-height:16px;color:#3a3a3a;letter-spacing:0.077px;">5.6kW</div>
<div class="t" style="left:1004.42px;top:499px;font-size:11.5px;line-height:16px;color:#3a3a3a;letter-spacing:0.353px;">14</div>
<div class="a" style="left:484px;top:520px;width:21px;height:25px;background:#95da78"></div>
<div class="a" style="left:457px;top:544px;width:708px;height:1px;background:#b0b0b0"></div>
<div class="cb" style="left:462px;top:524.6px;width:16.5px;height:16px"><svg style="position:absolute;left:-1px;top:-1px" width="16.5" height="16" viewBox="0 0 16 16" preserveAspectRatio="none"><path d="M4.6 8.3 L7.2 10.9 L12 5.1" fill="none" stroke="#1a1a1a" stroke-width="2.15" stroke-linecap="square"/></svg></div>
<div class="a" style="left:488.6px;top:527px"><svg style="display:block" viewBox="0 0 12 9" width="12" height="9"><path d="M1 3.9 L4 6.8 L10.2 0.9" fill="none" stroke="#40663c" stroke-width="1.5"/></svg></div>
<div class="t" style="left:509.90px;top:524px;font-size:12px;line-height:16px;color:#333;letter-spacing:0.775px;--w:500;"><span class="j">機械設備</span></div>
<div class="t" style="left:675.65px;top:524px;font-size:12px;line-height:16px;color:#3a3a3a;letter-spacing:-0.221px;--w:500;">07062_ACP-CID_<span class="j">室内機</span>_<span class="j">天井</span></div>
<div class="t" style="left:839.92px;top:524px;font-size:11.5px;line-height:16px;color:#3a3a3a;letter-spacing:0.077px;">5.6kW</div>
<div class="t" style="left:1004.42px;top:524px;font-size:11.5px;line-height:16px;color:#3a3a3a;letter-spacing:0.353px;">15</div>
<div class="a" style="left:484px;top:545px;width:21px;height:25px;background:#95da78"></div>
<div class="a" style="left:457px;top:569px;width:708px;height:1px;background:#b0b0b0"></div>
<div class="cb" style="left:462px;top:549.6px;width:16.5px;height:16px"><svg style="position:absolute;left:-1px;top:-1px" width="16.5" height="16" viewBox="0 0 16 16" preserveAspectRatio="none"><path d="M4.6 8.3 L7.2 10.9 L12 5.1" fill="none" stroke="#1a1a1a" stroke-width="2.15" stroke-linecap="square"/></svg></div>
<div class="a" style="left:488.6px;top:552px"><svg style="display:block" viewBox="0 0 12 9" width="12" height="9"><path d="M1 3.9 L4 6.8 L10.2 0.9" fill="none" stroke="#40663c" stroke-width="1.5"/></svg></div>
<div class="t" style="left:509.90px;top:549px;font-size:12px;line-height:16px;color:#333;letter-spacing:0.775px;--w:500;"><span class="j">機械設備</span></div>
<div class="t" style="left:675.65px;top:549px;font-size:12px;line-height:16px;color:#3a3a3a;letter-spacing:-0.221px;--w:500;">07062_ACP-CID_<span class="j">室内機</span>_<span class="j">天井</span></div>
<div class="t" style="left:839.92px;top:549px;font-size:11.5px;line-height:16px;color:#3a3a3a;letter-spacing:0.077px;">5.6kW</div>
<div class="t" style="left:1004.42px;top:549px;font-size:11.5px;line-height:16px;color:#3a3a3a;letter-spacing:0.353px;">16</div>
<div class="a" style="left:484px;top:570px;width:21px;height:25px;background:#95da78"></div>
<div class="a" style="left:457px;top:594px;width:708px;height:1px;background:#b0b0b0"></div>
<div class="cb" style="left:462px;top:574.6px;width:16.5px;height:16px"><svg style="position:absolute;left:-1px;top:-1px" width="16.5" height="16" viewBox="0 0 16 16" preserveAspectRatio="none"><path d="M4.6 8.3 L7.2 10.9 L12 5.1" fill="none" stroke="#1a1a1a" stroke-width="2.15" stroke-linecap="square"/></svg></div>
<div class="a" style="left:488.6px;top:577px"><svg style="display:block" viewBox="0 0 12 9" width="12" height="9"><path d="M1 3.9 L4 6.8 L10.2 0.9" fill="none" stroke="#40663c" stroke-width="1.5"/></svg></div>
<div class="t" style="left:509.90px;top:574px;font-size:12px;line-height:16px;color:#333;letter-spacing:0.775px;--w:500;"><span class="j">機械設備</span></div>
<div class="t" style="left:675.65px;top:574px;font-size:12px;line-height:16px;color:#3a3a3a;letter-spacing:-0.221px;--w:500;">07062_ACP-CID_<span class="j">室内機</span>_<span class="j">天井</span></div>
<div class="t" style="left:839.92px;top:574px;font-size:11.5px;line-height:16px;color:#3a3a3a;letter-spacing:0.077px;">5.6kW</div>
<div class="t" style="left:1004.42px;top:574px;font-size:11.5px;line-height:16px;color:#3a3a3a;letter-spacing:0.353px;">17</div>
<div class="a" style="left:484px;top:595px;width:21px;height:25px;background:#95da78"></div>
<div class="a" style="left:457px;top:619px;width:708px;height:1px;background:#b0b0b0"></div>
<div class="cb" style="left:462px;top:599.6px;width:16.5px;height:16px"><svg style="position:absolute;left:-1px;top:-1px" width="16.5" height="16" viewBox="0 0 16 16" preserveAspectRatio="none"><path d="M4.6 8.3 L7.2 10.9 L12 5.1" fill="none" stroke="#1a1a1a" stroke-width="2.15" stroke-linecap="square"/></svg></div>
<div class="a" style="left:488.6px;top:602px"><svg style="display:block" viewBox="0 0 12 9" width="12" height="9"><path d="M1 3.9 L4 6.8 L10.2 0.9" fill="none" stroke="#40663c" stroke-width="1.5"/></svg></div>
<div class="t" style="left:509.90px;top:599px;font-size:12px;line-height:16px;color:#333;letter-spacing:0.775px;--w:500;"><span class="j">機械設備</span></div>
<div class="t" style="left:675.65px;top:599px;font-size:12px;line-height:16px;color:#3a3a3a;letter-spacing:-0.221px;--w:500;">07062_ACP-CID_<span class="j">室内機</span>_<span class="j">天井</span></div>
<div class="t" style="left:839.92px;top:599px;font-size:11.5px;line-height:16px;color:#3a3a3a;letter-spacing:0.077px;">5.6kW</div>
<div class="t" style="left:1004.42px;top:599px;font-size:11.5px;line-height:16px;color:#3a3a3a;letter-spacing:0.353px;">18</div>
<div class="a" style="left:484px;top:620px;width:21px;height:25px;background:#95da78"></div>
<div class="a" style="left:457px;top:644px;width:708px;height:1px;background:#b0b0b0"></div>
<div class="cb" style="left:462px;top:624.6px;width:16.5px;height:16px"><svg style="position:absolute;left:-1px;top:-1px" width="16.5" height="16" viewBox="0 0 16 16" preserveAspectRatio="none"><path d="M4.6 8.3 L7.2 10.9 L12 5.1" fill="none" stroke="#1a1a1a" stroke-width="2.15" stroke-linecap="square"/></svg></div>
<div class="a" style="left:488.6px;top:627px"><svg style="display:block" viewBox="0 0 12 9" width="12" height="9"><path d="M1 3.9 L4 6.8 L10.2 0.9" fill="none" stroke="#40663c" stroke-width="1.5"/></svg></div>
<div class="t" style="left:509.90px;top:624px;font-size:12px;line-height:16px;color:#333;letter-spacing:0.775px;--w:500;"><span class="j">機械設備</span></div>
<div class="t" style="left:675.65px;top:624px;font-size:12px;line-height:16px;color:#3a3a3a;letter-spacing:-0.221px;--w:500;">07062_ACP-CID_<span class="j">室内機</span>_<span class="j">天井</span></div>
<div class="t" style="left:839.92px;top:624px;font-size:11.5px;line-height:16px;color:#3a3a3a;letter-spacing:0.077px;">5.6kW</div>
<div class="t" style="left:1004.42px;top:624px;font-size:11.5px;line-height:16px;color:#3a3a3a;letter-spacing:0.353px;">19</div>
<div class="a" style="left:484px;top:645px;width:21px;height:25px;background:#95da78"></div>
<div class="a" style="left:457px;top:669px;width:708px;height:1px;background:#b0b0b0"></div>
<div class="cb" style="left:462px;top:649.6px;width:16.5px;height:16px"><svg style="position:absolute;left:-1px;top:-1px" width="16.5" height="16" viewBox="0 0 16 16" preserveAspectRatio="none"><path d="M4.6 8.3 L7.2 10.9 L12 5.1" fill="none" stroke="#1a1a1a" stroke-width="2.15" stroke-linecap="square"/></svg></div>
<div class="a" style="left:488.6px;top:652px"><svg style="display:block" viewBox="0 0 12 9" width="12" height="9"><path d="M1 3.9 L4 6.8 L10.2 0.9" fill="none" stroke="#40663c" stroke-width="1.5"/></svg></div>
<div class="t" style="left:509.90px;top:649px;font-size:12px;line-height:16px;color:#333;letter-spacing:0.775px;--w:500;"><span class="j">機械設備</span></div>
<div class="t" style="left:675.65px;top:649px;font-size:12px;line-height:16px;color:#3a3a3a;letter-spacing:-0.221px;--w:500;">07062_ACP-CID_<span class="j">室内機</span>_<span class="j">天井</span></div>
<div class="t" style="left:839.92px;top:649px;font-size:11.5px;line-height:16px;color:#3a3a3a;letter-spacing:0.077px;">5.6kW</div>
<div class="t" style="left:1004.42px;top:649px;font-size:11.5px;line-height:16px;color:#3a3a3a;letter-spacing:0.353px;">20</div>
<div class="a" style="left:484px;top:670px;width:21px;height:24px;background:#95da78"></div>
<div class="a" style="left:457px;top:693px;width:708px;height:1px;background:#b0b0b0"></div>
<div class="cb" style="left:462px;top:674.6px;width:16.5px;height:16px"><svg style="position:absolute;left:-1px;top:-1px" width="16.5" height="16" viewBox="0 0 16 16" preserveAspectRatio="none"><path d="M4.6 8.3 L7.2 10.9 L12 5.1" fill="none" stroke="#1a1a1a" stroke-width="2.15" stroke-linecap="square"/></svg></div>
<div class="a" style="left:488.6px;top:677px"><svg style="display:block" viewBox="0 0 12 9" width="12" height="9"><path d="M1 3.9 L4 6.8 L10.2 0.9" fill="none" stroke="#40663c" stroke-width="1.5"/></svg></div>
<div class="t" style="left:509.90px;top:674px;font-size:12px;line-height:16px;color:#333;letter-spacing:0.775px;--w:500;"><span class="j">機械設備</span></div>
<div class="t" style="left:675.65px;top:674px;font-size:12px;line-height:16px;color:#3a3a3a;letter-spacing:-0.221px;--w:500;">07062_ACP-CID_<span class="j">室内機</span>_<span class="j">天井</span></div>
<div class="t" style="left:839.92px;top:674px;font-size:11.5px;line-height:16px;color:#3a3a3a;letter-spacing:0.077px;">5.6kW</div>
<div class="t" style="left:1004.42px;top:674px;font-size:11.5px;line-height:16px;color:#3a3a3a;letter-spacing:0.353px;">21</div>
<div class="a" style="left:484px;top:694px;width:21px;height:25px;background:#95da78"></div>
<div class="a" style="left:457px;top:718px;width:708px;height:1px;background:#b0b0b0"></div>
<div class="cb" style="left:462px;top:698.6px;width:16.5px;height:16px"><svg style="position:absolute;left:-1px;top:-1px" width="16.5" height="16" viewBox="0 0 16 16" preserveAspectRatio="none"><path d="M4.6 8.3 L7.2 10.9 L12 5.1" fill="none" stroke="#1a1a1a" stroke-width="2.15" stroke-linecap="square"/></svg></div>
<div class="a" style="left:488.6px;top:701px"><svg style="display:block" viewBox="0 0 12 9" width="12" height="9"><path d="M1 3.9 L4 6.8 L10.2 0.9" fill="none" stroke="#40663c" stroke-width="1.5"/></svg></div>
<div class="t" style="left:509.90px;top:698px;font-size:12px;line-height:16px;color:#333;letter-spacing:0.775px;--w:500;"><span class="j">機械設備</span></div>
<div class="t" style="left:675.65px;top:698px;font-size:12px;line-height:16px;color:#3a3a3a;letter-spacing:-0.221px;--w:500;">07062_ACP-CID_<span class="j">室内機</span>_<span class="j">天井</span></div>
<div class="t" style="left:839.92px;top:698px;font-size:11.5px;line-height:16px;color:#3a3a3a;letter-spacing:0.077px;">5.6kW</div>
<div class="t" style="left:1004.42px;top:698px;font-size:11.5px;line-height:16px;color:#3a3a3a;letter-spacing:0.353px;">22</div>
</div>
<div class="a" style="left:456px;top:141px;width:1px;height:565px;background:#cfcfcf"></div>
<div class="a" style="left:483px;top:141px;width:1px;height:565px;background:#b0b0b0"></div>
<div class="a" style="left:505px;top:141px;width:1px;height:565px;background:#b0b0b0"></div>
<div class="a" style="left:669px;top:141px;width:1px;height:565px;background:#b0b0b0"></div>
<div class="a" style="left:835px;top:141px;width:1px;height:565px;background:#b0b0b0"></div>
<div class="a" style="left:999px;top:141px;width:1px;height:565px;background:#b0b0b0"></div>
<div class="a" style="left:1164.5px;top:141px;width:1px;height:565px;background:#b0b0b0"></div>
<div class="a" style="left:1165.5px;top:141px;width:12px;height:565px;background:#f1f1f1;border-right:1px solid #c8c8c8"></div>
<div class="a" style="left:1168.7px;top:176.5px;width:5.5px;height:145px;background:#c4c4c4;border-radius:2.7px"></div>
<div class="a" style="left:456.5px;top:706px;width:721px;height:1px;background:#a6a6a6"></div>
<div class="a" style="left:1181.3px;top:45.5px;width:11.3px;height:661px;background:#d5d5d5;border:1px solid #acacac;border-radius:3px"></div>
<div class="t" style="left:1183.72px;top:370px;font-size:11.5px;line-height:16px;color:#5a5a5a;letter-spacing:0.0px;">&lt;</div>
<div class="btn" style="left:572px;top:731px;width:76px;height:30px;background:#d3d3d3;border-color:#a8a8a8"></div>
<svg class="a" style="left:586.5px;top:741px" width="11" height="11" viewBox="0 0 11 11"><path d="M2.200 3.300 A3.700 3.700 0 1 0 5.700 2.300" fill="none" stroke="#5e5e5e" stroke-width="1.100"/><path d="M.6 2.500 L2.600 5.300 L4.300 2.300 Z" fill="#5e5e5e"/></svg>
<div class="t" style="left:600.54px;top:738px;font-size:14.2px;line-height:16px;color:#5e5e5e;letter-spacing:-0.661px;">Reset</div>
<div class="btn" style="left:653.25px;top:731px;width:104.75px;height:30px;background:#f2c878;border-color:#b3ab98"></div>
<div class="t" style="left:660.04px;top:738px;font-size:14.2px;line-height:16px;color:#5e5e5e;letter-spacing:-0.330px;">Create Legend</div>
<div class="btn" style="left:763.5px;top:731px;width:133px;height:30px;background:#fdf0c0;border-color:#b5b1a4"></div>
<div class="t" style="left:775.04px;top:738px;font-size:14.2px;line-height:16px;color:#5e5e5e;letter-spacing:-0.431px;">Reset Overrides</div>
<svg class="a" style="left:879.3px;top:743.8px" width="8" height="6.5" viewBox="0 0 8 6.5"><path d="M1 1 L4 4.9 L7 1" fill="none" stroke="#222" stroke-width="2"/></svg>
<div class="btn" style="left:902px;top:731px;width:99px;height:30px;background:#fdf0c0;border-color:#b5b1a4"></div>
<div class="t" style="left:906.89px;top:738px;font-size:14.2px;line-height:16px;color:#5e5e5e;letter-spacing:-0.229px;">Apply to Views</div>
<div class="btn" style="left:1006.5px;top:731px;width:95px;height:30px;background:#fdf0c0;border-color:#b5b1a4"></div>
<div class="t" style="left:1015.19px;top:738px;font-size:14.2px;line-height:16px;color:#5e5e5e;letter-spacing:-0.229px;">Apply Colors</div>
<div class="btn" style="left:1106.5px;top:731px;width:76px;height:30px;background:#d3d3d3;border-color:#a8a8a8"></div>
<div class="t" style="left:1127.09px;top:738px;font-size:14.2px;line-height:16px;color:#5e5e5e;letter-spacing:0.180px;">Apply</div>
</div></body></html>
